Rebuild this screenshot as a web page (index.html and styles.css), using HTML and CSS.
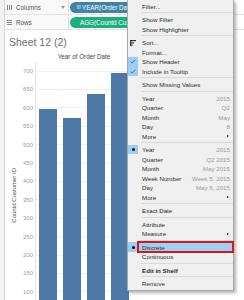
FILE: index.html
```html
<!DOCTYPE html>
<html>
<head>
<meta charset="utf-8">
<link rel="stylesheet" href="styles.css">
</head>
<body>
<div class="app">
  <div class="strip"></div>
  <div class="main">
    <div class="shelf">
      <div class="shelf-label">
        <svg class="ico" width="5" height="5" viewBox="0 0 5 5"><rect x="0" y="0" width="1" height="5" fill="#888"/><rect x="2" y="0" width="1" height="5" fill="#888"/><rect x="4" y="0" width="1" height="5" fill="#888"/></svg>
        <span>Columns</span>
        <svg class="dd" width="4" height="3" viewBox="0 0 4 3"><path d="M0 0H4L2 3Z" fill="#999"/></svg>
      </div>
      <div class="pill pill-blue">
        <svg width="4" height="4" viewBox="0 0 4 4"><rect x="0.25" y="0.25" width="3.5" height="3.5" fill="none" stroke="#cfe2ee" stroke-width="0.5"/><path d="M2 0.9V3.1M0.9 2H3.1" stroke="#cfe2ee" stroke-width="0.5"/></svg>
        <span class="pill-text">YEAR(Order Date)</span>
      </div>
    </div>
    <div class="shelf">
      <div class="shelf-label">
        <svg class="ico" width="5" height="5" viewBox="0 0 5 5"><rect x="0" y="0" width="5" height="1" fill="#888"/><rect x="0" y="2" width="5" height="1" fill="#888"/><rect x="0" y="4" width="5" height="1" fill="#888"/></svg>
        <span>Rows</span>
      </div>
      <div class="pill pill-green"><span class="pill-text">AGG(Countd Customer ID)</span></div>
    </div>
    <div class="sheet">
      <div class="title">Sheet 12 (2)</div>
      <div class="chart">
        <div class="header">Year of Order Date</div>
        <div class="axis-title"><span>Countd Customer ID</span></div>
        <div class="labels">
          <div>700</div><div>650</div><div>600</div><div>550</div><div>500</div><div>450</div><div>400</div><div>350</div><div>300</div><div>250</div><div>200</div><div>150</div><div>100</div>
        </div>
        <div class="plot">
          <div class="bar" style="height:219.7px"></div>
          <div class="bar" style="height:210.5px"></div>
          <div class="bar" style="height:234.4px"></div>
          <div class="bar" style="height:255.8px"></div>
        </div>
      </div>
    </div>
  </div>
</div>

<div class="menu">
  <div class="item"><span class="mk"></span><span class="body"><span>Filter...</span></span></div>
  <div class="sep"></div>
  <div class="item"><span class="mk"></span><span class="body"><span>Show Filter</span></span></div>
  <div class="item"><span class="mk"></span><span class="body"><span>Show Highlighter</span></span></div>
  <div class="sep"></div>
  <div class="item"><span class="mk"><svg width="6" height="6" viewBox="0 0 6 6"><rect x="0" y="0" width="6" height="1.2" fill="#333"/><rect x="0" y="0" width="1.2" height="6" fill="#333"/><rect x="0" y="2.3" width="4" height="1.2" fill="#333"/><rect x="0" y="4.6" width="2.5" height="1.2" fill="#333"/></svg></span><span class="body"><span>Sort...</span></span></div>
  <div class="item"><span class="mk"></span><span class="body"><span>Format...</span></span></div>
  <div class="item"><span class="mk on"><svg width="6" height="5" viewBox="0 0 6 5"><path d="M0.6 2.6L2.2 4.1L5.4 0.8" fill="none" stroke="#2f74c0" stroke-width="1"/></svg></span><span class="body"><span>Show Header</span></span></div>
  <div class="item"><span class="mk on"><svg width="6" height="5" viewBox="0 0 6 5"><path d="M0.6 2.6L2.2 4.1L5.4 0.8" fill="none" stroke="#2f74c0" stroke-width="1"/></svg></span><span class="body"><span>Include in Tooltip</span></span></div>
  <div class="sep"></div>
  <div class="item"><span class="mk"></span><span class="body"><span>Show Missing Values</span></span></div>
  <div class="sep"></div>
  <div class="item"><span class="mk"></span><span class="body"><span>Year</span><span class="val">2015</span></span></div>
  <div class="item"><span class="mk"></span><span class="body"><span>Quarter</span><span class="val">Q2</span></span></div>
  <div class="item"><span class="mk"></span><span class="body"><span>Month</span><span class="val">May</span></span></div>
  <div class="item"><span class="mk"></span><span class="body"><span>Day</span><span class="val">8</span></span></div>
  <div class="item"><span class="mk"></span><span class="body"><span>More</span><span class="arrow"></span></span></div>
  <div class="sep"></div>
  <div class="item"><span class="mk on"><span class="dot"></span></span><span class="body"><span>Year</span><span class="val">2015</span></span></div>
  <div class="item"><span class="mk"></span><span class="body"><span>Quarter</span><span class="val">Q2 2015</span></span></div>
  <div class="item"><span class="mk"></span><span class="body"><span>Month</span><span class="val">May 2015</span></span></div>
  <div class="item"><span class="mk"></span><span class="body"><span>Week Number</span><span class="val">Week 5, 2015</span></span></div>
  <div class="item"><span class="mk"></span><span class="body"><span>Day</span><span class="val">May 8, 2015</span></span></div>
  <div class="item"><span class="mk"></span><span class="body"><span>More</span><span class="arrow"></span></span></div>
  <div class="sep"></div>
  <div class="item"><span class="mk"></span><span class="body"><span>Exact Date</span></span></div>
  <div class="sep"></div>
  <div class="item"><span class="mk"></span><span class="body"><span>Attribute</span></span></div>
  <div class="item"><span class="mk"></span><span class="body"><span>Measure</span><span class="arrow"></span></span></div>
  <div class="sep"></div>
  <div class="item sel"><span class="mk on"><span class="dot"></span></span><span class="body"><span>Discrete</span></span></div>
  <div class="item"><span class="mk"></span><span class="body"><span>Continuous</span></span></div>
  <div class="sep"></div>
  <div class="item bold"><span class="mk"></span><span class="body"><span>Edit in Shelf</span></span></div>
  <div class="sep"></div>
  <div class="item"><span class="mk"></span><span class="body"><span>Remove</span></span></div>
</div>
</body>
</html>
```

FILE: styles.css
```css
html, body {
  margin: 0;
  padding: 0;
}
body {
  width: 244px;
  height: 300px;
  overflow: hidden;
  position: relative;
  background: #fff;
  font-family: "Liberation Sans", Arial, sans-serif;
  color: #333;
}
.app {
  display: flex;
  height: 300px;
}
.strip {
  width: 4px;
  flex-shrink: 0;
  background: #f2f2f2;
  border-right: 1px solid #d6d6d6;
}
.main {
  flex: 1;
  min-width: 0;
  display: flex;
  flex-direction: column;
}
.shelf {
  display: flex;
  align-items: center;
  height: 15px;
  flex-shrink: 0;
  box-sizing: border-box;
  border-bottom: 1px solid #e2e2e2;
  overflow: hidden;
}
.shelf-label {
  width: 64px;
  height: 100%;
  box-sizing: border-box;
  display: flex;
  align-items: center;
  gap: 4px;
  padding: 0 3px 0 2px;
  background: #f9f9f9;
  border-right: 1px solid #dddddd;
  font-size: 6.3px;
  color: #555;
  flex-shrink: 0;
}
.shelf-label .dd {
  margin-left: auto;
}
.pill {
  margin-left: 1px;
  height: 11px;
  width: 64px;
  flex-shrink: 0;
  border-radius: 6px 0 0 6px;
  display: flex;
  align-items: center;
  gap: 1px;
  color: #fff;
  font-size: 6.3px;
  white-space: nowrap;
  overflow: hidden;
  box-sizing: border-box;
}
.pill-text {
  overflow: hidden;
  min-width: 0;
}
.pill-blue {
  background: #4283ab;
  padding-left: 7px;
}
.pill-green {
  background: #1cb07b;
  padding-left: 10px;
}
.sheet {
  flex: 1;
  min-height: 0;
  overflow: hidden;
  padding-top: 5px;
  background: #fff;
}
.title {
  font-size: 10.5px;
  line-height: 14px;
  padding-left: 4px;
  color: #6e6e6e;
}
.chart {
  display: grid;
  grid-template-columns: 17px 13px 98px;
  grid-template-rows: 10px 266.6px;
  margin-top: 3px;
}
.header {
  grid-column: 3;
  grid-row: 1;
  text-align: center;
  font-size: 6.3px;
  line-height: 10px;
  color: #444;
}
.axis-title {
  grid-column: 1;
  grid-row: 2;
  display: flex;
  align-items: center;
  justify-content: center;
}
.axis-title span {
  writing-mode: vertical-rl;
  transform: rotate(180deg);
  font-size: 6px;
  color: #4a4a4a;
  white-space: nowrap;
}
.labels {
  grid-column: 2;
  grid-row: 2;
  display: flex;
  flex-direction: column;
  overflow: hidden;
}
.labels div {
  height: 18.4px;
  line-height: 18.4px;
  flex-shrink: 0;
  text-align: right;
  padding-right: 2px;
  font-size: 6px;
  color: #9c9c9c;
}
.plot {
  grid-column: 3;
  grid-row: 2;
  border-left: 1px solid #e4e4e4;
  display: flex;
  align-items: flex-end;
  gap: 6px;
  padding-left: 3px;
  background-image: repeating-linear-gradient(to bottom, transparent 0, transparent 8.7px, #f0f0f0 8.7px, #f0f0f0 9.7px, transparent 9.7px, transparent 18.4px);
}
.bar {
  width: 18px;
  background: #4e79a7;
}
.menu {
  position: absolute;
  left: 127px;
  top: 0;
  width: 107px;
  box-sizing: border-box;
  background: #f0f0f0;
  border: 1px solid #a9a9a9;
  border-top: none;
  padding: 1.25px 0 2px;
  box-shadow: 2px 2px 3px rgba(0, 0, 0, 0.3);
  font-size: 6.2px;
  color: #2b2b2b;
}
.item {
  display: flex;
  height: 9.5px;
  align-items: stretch;
}
.mk {
  width: 10px;
  flex-shrink: 0;
  display: flex;
  align-items: center;
  justify-content: center;
}
.mk.on {
  background: #9fcdf1;
}
.dot {
  width: 3px;
  height: 3px;
  border-radius: 50%;
  background: #111;
}
.body {
  flex: 1;
  display: flex;
  align-items: center;
  justify-content: space-between;
  padding: 0 3px 0 4px;
  white-space: nowrap;
}
.val {
  color: #9a9a9a;
}
.arrow {
  width: 0;
  height: 0;
  border-top: 1.5px solid transparent;
  border-bottom: 1.5px solid transparent;
  border-left: 2px solid #111;
  margin-right: 1px;
}
.sep {
  height: 1px;
  background: #d9d9d9;
  margin: 1.5px 0 1.5px 13px;
}
.item.sel .body {
  background: #9fcff3;
  outline: 2px solid #d8141c;
  outline-offset: -1px;
}
.item.bold {
  font-weight: bold;
}
```
